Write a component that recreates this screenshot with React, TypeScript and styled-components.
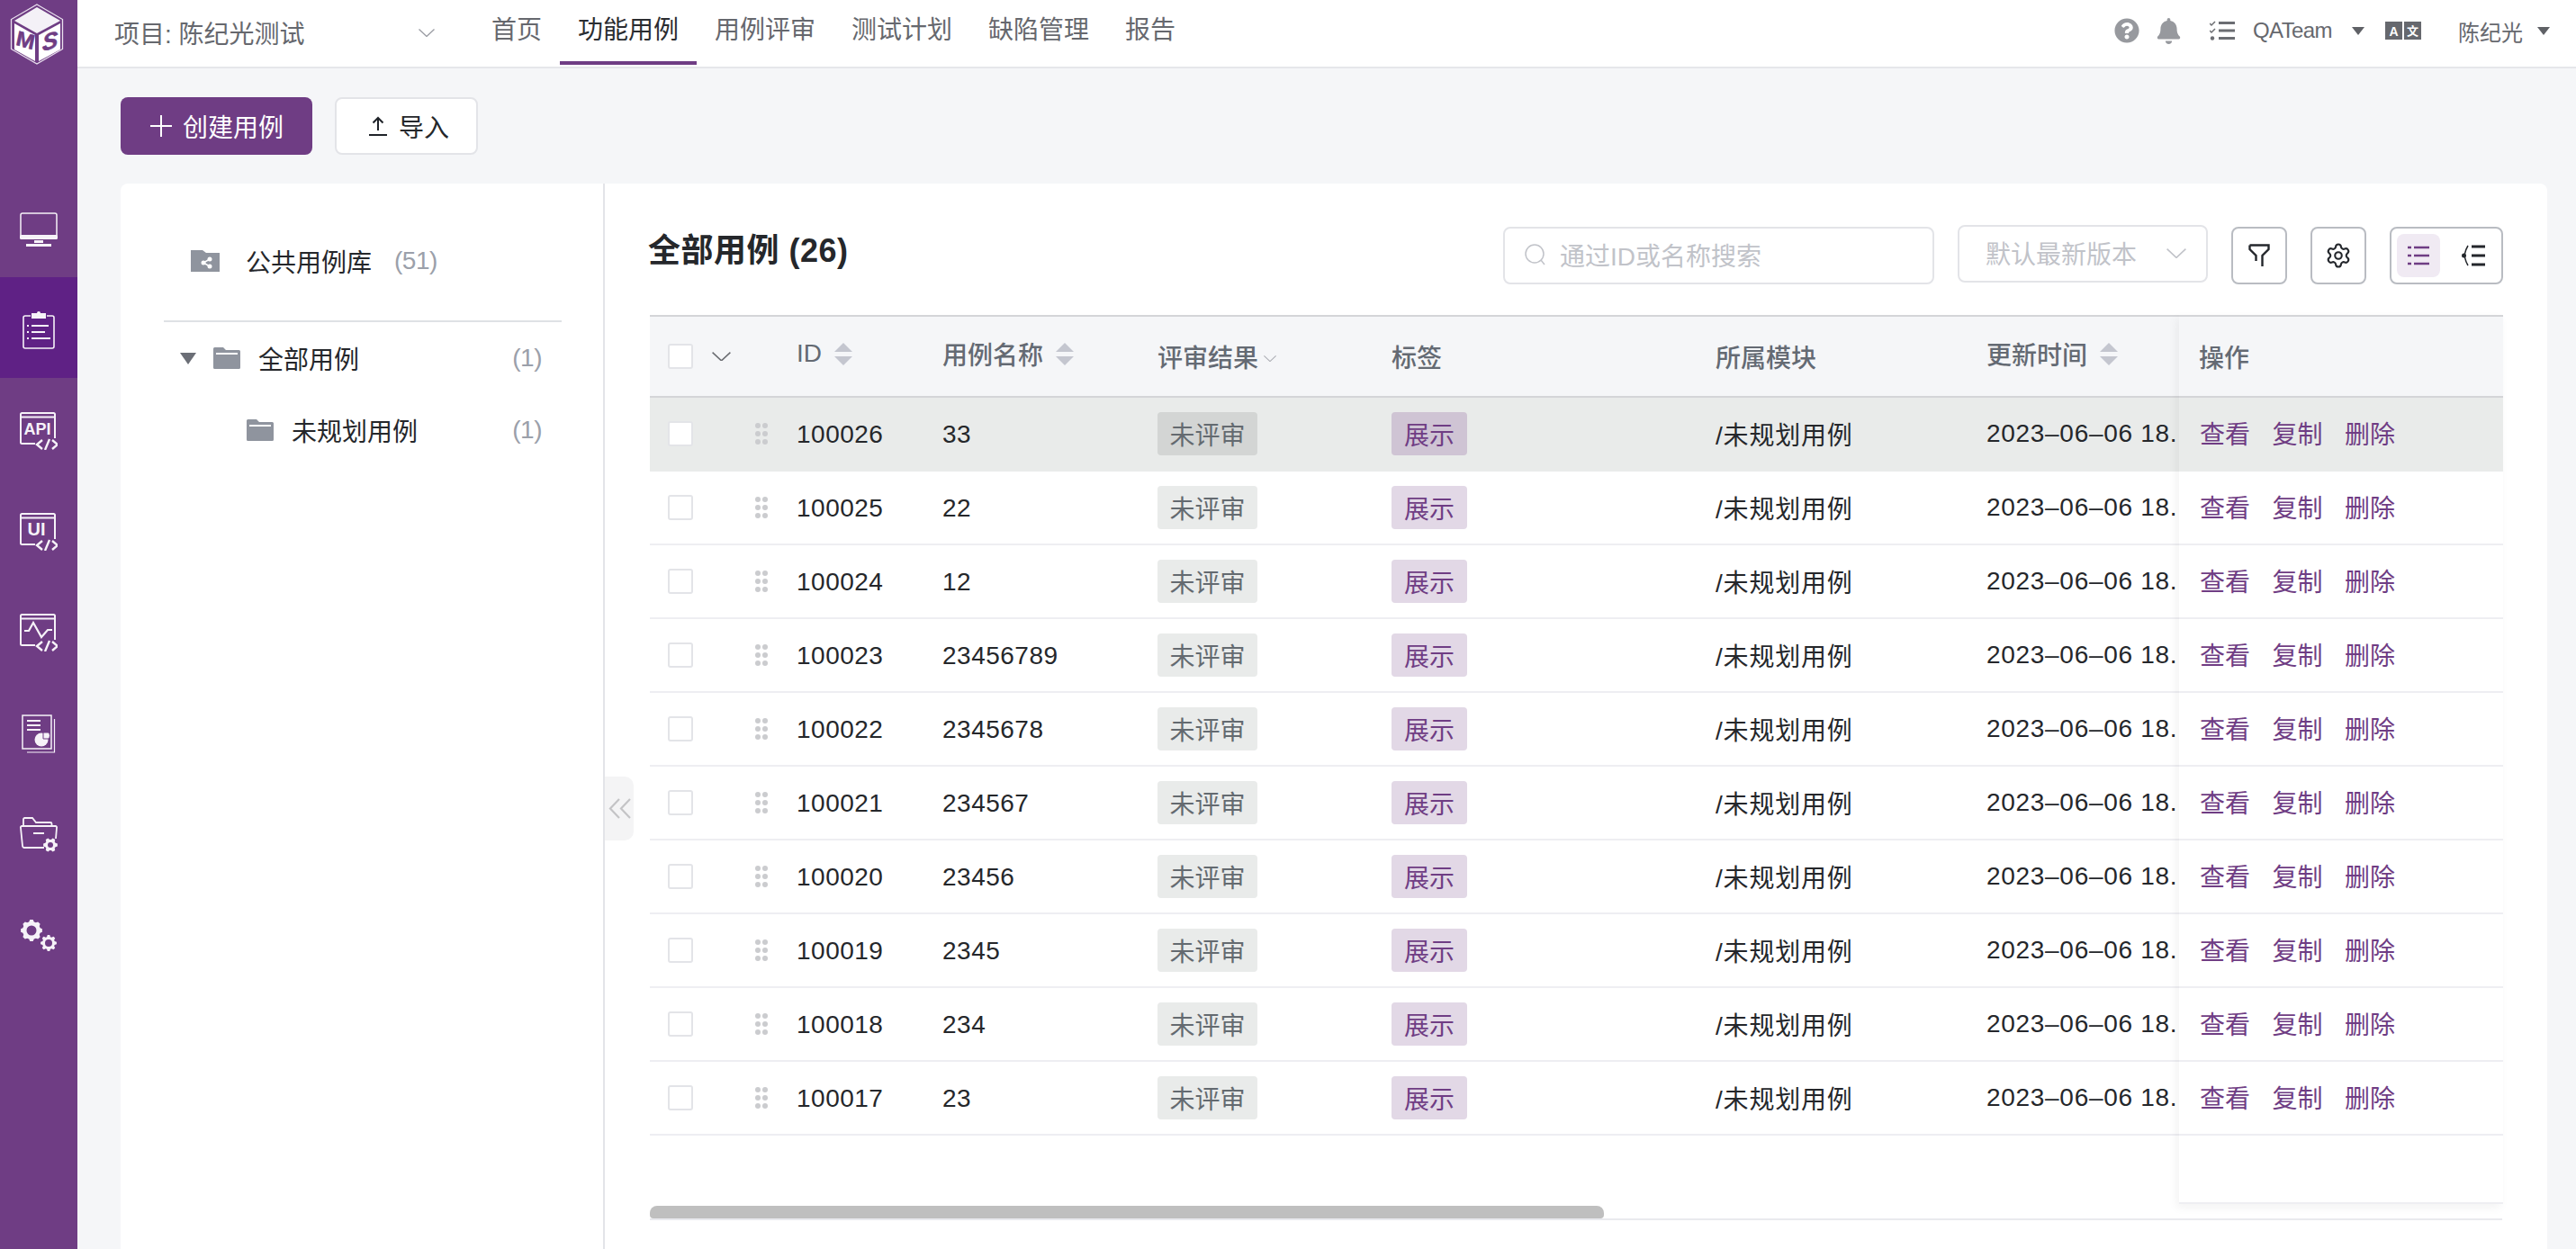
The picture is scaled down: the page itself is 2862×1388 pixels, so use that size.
import styled, { createGlobalStyle } from 'styled-components'
import { FaBell, FaQuestionCircle } from 'react-icons/fa'
import { Settings } from 'lucide-react'

const cases = [
  { id: '100026', name: '33' },
  { id: '100025', name: '22' },
  { id: '100024', name: '12' },
  { id: '100023', name: '23456789' },
  { id: '100022', name: '2345678' },
  { id: '100021', name: '234567' },
  { id: '100020', name: '23456' },
  { id: '100019', name: '2345' },
  { id: '100018', name: '234' },
  { id: '100017', name: '23' },
]

const tabs = ['首页', '功能用例', '用例评审', '测试计划', '缺陷管理', '报告']

const primary = '#6f3d84'
const iconWhite = '#f6f2f8'

const gearPath = (cx: number, cy: number, r: number, R: number, n: number) => {
  const pts: string[] = []
  const step = (Math.PI * 2) / n
  for (let i = 0; i < n; i++) {
    const a = i * step
    const at = (rad: number, ang: number) =>
      `${(cx + rad * Math.cos(ang)).toFixed(2)} ${(cy + rad * Math.sin(ang)).toFixed(2)}`
    pts.push(at(r, a - step * 0.36), at(R, a - step * 0.18), at(R, a + step * 0.18), at(r, a + step * 0.36))
  }
  return `M${pts.join('L')}Z`
}

const CodeMark = () => (
  <path d="M25 31l-6 5 6 5M36 31l6 5-6 5M28 42l5-12" fill="none" stroke={iconWhite} strokeWidth="2.400" />
)

const WindowFrame = () => (
  <path
    d="M17 35H2.500A1.500 1.500 0 0 1 1 33.500V2.500A1.500 1.500 0 0 1 2.500 1h35A1.500 1.500 0 0 1 39 2.500V29M1 5.500h38"
    fill="none"
    stroke={iconWhite}
    strokeWidth="2"
  />
)

const icons: React.ReactNode[] = [
  <svg key="desk" width="42" height="38" viewBox="0 0 42 38">
    <rect x="1" y="1" width="40" height="28" rx="2" fill="none" stroke={iconWhite} strokeWidth="1.500" />
    <rect y="25" width="42" height="5" rx="1.500" fill={iconWhite} />
    <rect x="16" y="31" width="10" height="3" fill={iconWhite} />
    <rect x="7" y="35" width="28" height="3" fill={iconWhite} />
  </svg>,
  <svg key="case" width="36" height="42" viewBox="0 0 36 42">
    <path d="M9 5H3a2 2 0 0 0-2 2v32a2 2 0 0 0 2 2h30a2 2 0 0 0 2-2V7a2 2 0 0 0-2-2h-6" fill="none" stroke={iconWhite} strokeWidth="1.600" />
    <path d="M10 2h6a2 2 0 0 1 4 0h6v6H10z" fill={iconWhite} />
    <path d="M5 16h2M5 23h2M5 30h2M10 16h19M10 23h15M10 30h21" stroke={iconWhite} strokeWidth="2" />
  </svg>,
  <svg key="api" width="42" height="42" viewBox="0 0 42 42">
    <WindowFrame />
    <text x="19.500" y="25" textAnchor="middle" fontSize="18" fontWeight="700" fontFamily="Liberation Sans" fill={iconWhite}>API</text>
    <CodeMark />
  </svg>,
  <svg key="ui" width="42" height="42" viewBox="0 0 42 42">
    <WindowFrame />
    <text x="18.500" y="25" textAnchor="middle" fontSize="20" fontWeight="700" fontFamily="Liberation Sans" fill={iconWhite}>UI</text>
    <CodeMark />
  </svg>,
  <svg key="perf" width="42" height="42" viewBox="0 0 42 42">
    <WindowFrame />
    <path d="M5 19h5l5-9 9 16 7-8h5" fill="none" stroke={iconWhite} strokeWidth="2.200" />
    <CodeMark />
  </svg>,
  <svg key="report" width="38" height="43" viewBox="0 0 38 43">
    <rect x="1" y="1" width="32" height="37" fill="none" stroke={iconWhite} strokeWidth="1.500" />
    <path d="M36.500 5v37H6" fill="none" stroke={iconWhite} strokeWidth="1.200" />
    <path d="M6 7h15M6 12h15M6 17h15" stroke={iconWhite} strokeWidth="1.800" />
    <circle cx="22" cy="28" r="7.500" fill={iconWhite} />
    <path d="M24 20h6a5 5 0 0 1 0 7h-6z" fill={iconWhite} stroke={primary} strokeWidth="1" />
  </svg>,
  <svg key="files" width="42" height="40" viewBox="0 0 42 40">
    <path d="M4 10V3.500A1.500 1.500 0 0 1 5.500 2H14l4 5h16a1.500 1.500 0 0 1 1.500 1.500V11" fill="none" stroke={iconWhite} strokeWidth="1.800" />
    <path d="M27 35H5a2 2 0 0 1-2-2L1 13a1.500 1.500 0 0 1 1.500-2h37a1.500 1.500 0 0 1 1.500 2l-1 12" fill="none" stroke={iconWhite} strokeWidth="1.800" />
    <path d="M15 19h12" stroke={iconWhite} strokeWidth="2" />
    <path d={gearPath(34, 32, 6, 8, 6)} fill={iconWhite} />
    <circle cx="34" cy="32" r="3" fill={primary} />
  </svg>,
  <svg key="gears" width="40" height="35" viewBox="0 0 40 35">
    <path d={gearPath(12, 12, 10, 12, 8)} fill={iconWhite} />
    <circle cx="12" cy="12" r="5.500" fill={primary} />
    <path d={gearPath(31, 26, 7, 9, 8)} fill={iconWhite} />
    <circle cx="31" cy="26" r="4" fill={primary} />
  </svg>,
]

const Logo = () => (
  <svg width="60" height="68" viewBox="0 0 60 68">
    <path d="M30 1l28.500 16.500v33L30 67 1.500 50.500v-33z" fill="none" stroke="#e9e0ee" strokeWidth="1.300" />
    <path d="M30 4l26 15-26 14L5 19z" fill="#f4f1f7" />
    <path d="M5 22l23 13v29L5 51z" fill="#fff" />
    <path d="M32 35l24-13v29L32 64z" fill="#fff" />
    <text transform="translate(7 46) skewY(16)" fontSize="24" fontWeight="700" fontStyle="italic" fontFamily="Liberation Sans" stroke={primary} strokeWidth="0.600" fill={primary}>M</text>
    <text transform="translate(36 53) skewY(-16)" fontSize="26" fontWeight="700" fontStyle="italic" fontFamily="Liberation Sans" stroke={primary} strokeWidth="0.600" fill={primary}>S</text>
  </svg>
)

const Chevron = ({ size = 18, color = '#9a9ca3' }: { size?: number; color?: string }) => (
  <svg width={size} height={size / 2} viewBox="0 0 18 9">
    <path d="M.5.5L9 8.500 17.500.5" fill="none" stroke={color} strokeWidth="1.300" />
  </svg>
)

const Folder = () => (
  <svg width="30" height="24" viewBox="0 0 30 24">
    <path d="M0 1.500A1.500 1.500 0 0 1 1.500 0H11l3 3h14.500A1.500 1.500 0 0 1 30 4.500V22.500a1.500 1.500 0 0 1-1.500 1.500h-27A1.500 1.500 0 0 1 0 22.500z" fill="#8f949e" />
    <rect x="3" y="6" width="24" height="2" fill="#fff" />
  </svg>
)

const SortIcon = () => (
  <SortMark>
    <span />
    <span />
  </SortMark>
)

const DragDots = () => (
  <svg width="14" height="24" viewBox="0 0 14 24">
    {[3, 12, 21].map((y) => (
      <g key={y} fill="#cbcccf">
        <circle cx="3" cy={y} r="3" />
        <circle cx="11" cy={y} r="3" />
      </g>
    ))}
  </svg>
)

export default function App() {
  return (
    <Page>
      <GlobalStyle />
      <SideBar>
        <LogoBox>
          <Logo />
        </LogoBox>
        {icons.map((icon, i) => (
          <SideItem key={i} $active={i === 1}>
            {icon}
          </SideItem>
        ))}
      </SideBar>

      <Main>
        <TopBar>
          <ProjectSelect>
            <span>项目: 陈纪光测试</span>
            <Chevron />
          </ProjectSelect>
          <Tabs>
            {tabs.map((tab, i) => (
              <Tab key={tab} $active={i === 1}>
                {tab}
              </Tab>
            ))}
          </Tabs>
          <TopRight>
            <TopItem $gap={0}>
              <FaQuestionCircle size={28} color="#97999e" />
            </TopItem>
            <TopItem $gap={18}>
              <FaBell size={29} color="#97999e" />
            </TopItem>
            <TopItem $gap={31}>
              <svg width="28" height="22" viewBox="0 0 28 22">
                <path d="M0 3l2 2 4-4M0 11l2 2 4-4" fill="none" stroke="#6b6d72" strokeWidth="1.500" />
                <circle cx="3" cy="19.500" r="2.200" fill="#6b6d72" />
                <path d="M10 2.500h18M10 11h18M10 19.500h18" stroke="#6b6d72" strokeWidth="3" />
              </svg>
            </TopItem>
            <TopItem $gap={20}>
              <TeamName>QATeam</TeamName>
            </TopItem>
            <TopItem $gap={22}>
              <Caret />
            </TopItem>
            <TopItem $gap={23}>
              <svg width="40" height="20" viewBox="0 0 40 20">
                <rect width="19" height="20" fill="#66686e" />
                <rect x="21" width="19" height="20" fill="#66686e" />
                <text x="9.500" y="15.500" textAnchor="middle" fontSize="14" fontWeight="700" fontFamily="Liberation Sans" fill="#fff">A</text>
                <text x="30.500" y="15" textAnchor="middle" fontSize="13" fontWeight="700" fontFamily="Noto Sans CJK SC" fill="#fff">文</text>
              </svg>
            </TopItem>
            <TopItem $gap={41}>
              <UserName>陈纪光</UserName>
            </TopItem>
            <TopItem $gap={16}>
              <Caret />
            </TopItem>
          </TopRight>
        </TopBar>

        <Actions>
          <PrimaryButton>
            <svg width="24" height="24" viewBox="0 0 24 24">
              <path d="M12 0v24M0 12h24" stroke="#fff" strokeWidth="2" />
            </svg>
            创建用例
          </PrimaryButton>
          <GhostButton>
            <svg width="22" height="22" viewBox="0 0 22 22">
              <path d="M11 16V2M5.500 7.500L11 2l5.500 5.500M1 21h20" fill="none" stroke="#1f2329" strokeWidth="2" />
            </svg>
            导入
          </GhostButton>
        </Actions>

        <Panel>
          <TreePane>
            <PublicRow>
              <svg width="32" height="24" viewBox="0 0 32 24">
                <path d="M0 0h13l4 3h15v21H0z" fill="#8f949e" />
                <circle cx="21" cy="10" r="2.500" fill="#fff" />
                <circle cx="21" cy="18" r="2.500" fill="#fff" />
                <circle cx="14" cy="14" r="2.500" fill="#fff" />
                <path d="M21 10l-7 4 7 4" fill="none" stroke="#fff" strokeWidth="1.500" />
              </svg>
              <PublicName>公共用例库</PublicName>
              <Count>(51)</Count>
            </PublicRow>
            <TreeDivider />
            <TreeRow $indent={18}>
              <TreeCaret />
              <Folder />
              <TreeLabel>全部用例</TreeLabel>
              <Count>(1)</Count>
            </TreeRow>
            <TreeRow $indent={92}>
              <Folder />
              <TreeLabel>未规划用例</TreeLabel>
              <Count>(1)</Count>
            </TreeRow>
          </TreePane>

          <CollapseHandle>
            <svg width="25" height="23" viewBox="0 0 25 23">
              <path d="M12 1L2 11.500 12 22M24 1L14 11.500 24 22" fill="none" stroke="#c4c4c6" strokeWidth="2.200" />
            </svg>
          </CollapseHandle>

          <ContentPane>
            <ContentTop>
              <Title>全部用例 (26)</Title>
              <Toolbar>
                <SearchBox>
                  <svg width="24" height="24" viewBox="0 0 24 24">
                    <circle cx="11" cy="11" r="10" fill="none" stroke="#c1c3c9" strokeWidth="1.500" />
                    <path d="M18 18l4 5" stroke="#c1c3c9" strokeWidth="1.500" />
                  </svg>
                  <span>通过ID或名称搜索</span>
                </SearchBox>
                <VersionSelect>
                  <span>默认最新版本</span>
                  <Chevron size={22} color="#c1c3c9" />
                </VersionSelect>
                <IconButton>
                  <svg width="24" height="26" viewBox="0 0 24 26">
                    <path d="M1.500 1.500h21v4.500l-7 7v12M1.500 1.500v4.500l7 7v6" fill="none" stroke="#24272c" strokeWidth="2.400" />
                  </svg>
                </IconButton>
                <IconButton>
                  <Settings size={30} color="#24272c" strokeWidth={1.700} />
                </IconButton>
                <ViewToggle>
                  <ViewActive>
                    <svg width="24" height="22" viewBox="0 0 24 22">
                      <path d="M0 2h4M0 11h4M0 20h4M7 2h17M7 11h17M7 20h17" stroke={primary} strokeWidth="2.500" />
                    </svg>
                  </ViewActive>
                  <svg width="26" height="24" viewBox="0 0 26 24">
                    <path d="M7 1C4 6 4 8 3 12c1 4 1 6 4 11" fill="none" stroke="#24272c" strokeWidth="1.500" />
                    <circle cx="2.500" cy="12" r="2.500" fill="#24272c" />
                    <path d="M11 2h15M11 12h15M11 22h15" stroke="#24272c" strokeWidth="3" />
                  </svg>
                </ViewToggle>
              </Toolbar>
            </ContentTop>

            <TableBody>
              <Rows>
                <HeadRow>
                  <HeadCell>
                    <CheckBox />
                    <HeadChevron>
                      <Chevron size={21} color="#6b6d72" />
                    </HeadChevron>
                  </HeadCell>
                  <HeadCell $raised>
                    ID
                    <SortIcon />
                  </HeadCell>
                  <HeadCell $raised>
                    用例名称
                    <SortIcon />
                  </HeadCell>
                  <HeadCell>
                    评审结果
                    <TinyChevron>
                      <Chevron size={14} color="#a9abb1" />
                    </TinyChevron>
                  </HeadCell>
                  <HeadCell>标签</HeadCell>
                  <HeadCell>所属模块</HeadCell>
                  <HeadCell $raised>
                    更新时间
                    <SortIcon />
                  </HeadCell>
                </HeadRow>
                {cases.map((c, i) => (
                  <Row key={c.id} $hover={i === 0}>
                    <CheckCell>
                      <CheckBox />
                      <DragDots />
                    </CheckCell>
                    <NumberCell>{c.id}</NumberCell>
                    <NumberCell>{c.name}</NumberCell>
                    <Cell>
                      <ReviewTag $hover={i === 0}>未评审</ReviewTag>
                    </Cell>
                    <Cell>
                      <LabelTag $hover={i === 0}>展示</LabelTag>
                    </Cell>
                    <ModuleCell>/未规划用例</ModuleCell>
                    <TimeCell>2023–06–06 18.</TimeCell>
                  </Row>
                ))}
              </Rows>
              <OpsColumn>
                <OpsHead>操作</OpsHead>
                {cases.map((c, i) => (
                  <OpsRow key={c.id} $hover={i === 0}>
                    <OpLink>查看</OpLink>
                    <OpLink>复制</OpLink>
                    <OpLink>删除</OpLink>
                  </OpsRow>
                ))}
              </OpsColumn>
            </TableBody>
            <ScrollTrack>
              <ScrollThumb />
            </ScrollTrack>
          </ContentPane>
        </Panel>
      </Main>
    </Page>
  )
}

const GlobalStyle = createGlobalStyle`
  html, body {
    margin: 0;
    padding: 0;
    background: #f5f6f8;
  }

  * {
    box-sizing: border-box;
  }
`

const Page = styled.div`
  display: flex;
  width: 2862px;
  height: 1388px;
  overflow: hidden;
  background: #f5f6f8;
  color: #25272b;
  font-family: 'Liberation Sans', 'Noto Sans CJK SC', sans-serif;
  font-size: 28px;
`

const SideBar = styled.aside`
  flex: 0 0 86px;
  background: ${primary};
`

const LogoBox = styled.div`
  display: flex;
  justify-content: flex-start;
  height: 196px;
  padding: 4px 1px 0 11px;
`

const SideItem = styled.div<{ $active?: boolean }>`
  display: flex;
  align-items: center;
  justify-content: center;
  height: 112px;
  padding-top: 6px;
  background: ${({ $active }) => ($active ? '#5f2185' : 'transparent')};
`

const Main = styled.div`
  flex: 1;
  display: flex;
  flex-direction: column;
  min-width: 0;
`

const TopBar = styled.header`
  display: flex;
  align-items: center;
  height: 76px;
  padding-left: 41px;
  background: #fff;
  border-bottom: 2px solid #e6e7ea;
`

const ProjectSelect = styled.div`
  display: flex;
  align-items: center;
  justify-content: space-between;
  width: 356px;
  padding-bottom: 2px;
  color: #66686e;
`

const Tabs = styled.nav`
  display: flex;
  align-self: flex-start;
  margin-left: 43px;
`

const Tab = styled.div<{ $active?: boolean }>`
  height: 72px;
  padding: 0 20px;
  line-height: 68px;
  color: ${({ $active }) => ($active ? '#2b2d31' : '#66686e')};
  border-bottom: 4px solid ${({ $active }) => ($active ? primary : 'transparent')};
`

const TopRight = styled.div`
  display: flex;
  align-items: center;
  margin-left: auto;
  padding-right: 29px;
  padding-bottom: 6px;
`

const TopItem = styled.div<{ $gap: number }>`
  display: flex;
  align-items: center;
  margin-left: ${({ $gap }) => $gap}px;
`

const TeamName = styled.span`
  font-size: 24px;
  letter-spacing: -0.600px;
  color: #66686e;
`

const UserName = styled.span`
  font-size: 24px;
  color: #66686e;
`

const Caret = styled.span`
  width: 0;
  height: 0;
  border-left: 7.500px solid transparent;
  border-right: 7.500px solid transparent;
  border-top: 9px solid #5f6166;
`

const Actions = styled.div`
  display: flex;
  gap: 25px;
  padding: 32px 0 32px 48px;
`

const PrimaryButton = styled.div`
  display: flex;
  align-items: center;
  gap: 12px;
  height: 64px;
  width: 213px;
  padding-left: 33px;
  border-radius: 8px;
  background: ${primary};
  color: #fff;
`

const GhostButton = styled.div`
  display: flex;
  align-items: center;
  gap: 12px;
  height: 64px;
  width: 159px;
  padding-left: 35px;
  border: 2px solid #e3e4e8;
  border-radius: 8px;
  background: #fff;
  color: #25272b;
`

const Panel = styled.section`
  position: relative;
  flex: 1;
  display: flex;
  margin: 0 32px 0 48px;
  background: #fff;
  border-radius: 8px 8px 0 0;
`

const TreePane = styled.div`
  flex: 0 0 538px;
  padding: 56px 0 0 48px;
  border-right: 2px solid #e3e4e8;
`

const PublicRow = styled.div`
  display: flex;
  align-items: center;
  height: 60px;
  padding-left: 30px;
`

const PublicName = styled.span`
  margin-left: 29px;
`

const Count = styled.span`
  margin-left: 25px;
  letter-spacing: -0.500px;
  color: #9ba0aa;
`

const TreeDivider = styled.div`
  width: 442px;
  height: 2px;
  margin-top: 36px;
  background: #dfe1e5;
`

const TreeRow = styled.div<{ $indent: number }>`
  display: flex;
  align-items: center;
  width: 442px;
  height: 80px;
  padding: 0 22px 0 ${({ $indent }) => $indent}px;

  ${Count} {
    margin-left: auto;
  }
`

const TreeCaret = styled.span`
  width: 0;
  height: 0;
  margin-right: 19px;
  border-left: 9.500px solid transparent;
  border-right: 9.500px solid transparent;
  border-top: 13px solid #6b6e76;
`

const TreeLabel = styled.span`
  margin-left: 20px;
`

const CollapseHandle = styled.div`
  position: absolute;
  top: 659px;
  left: 538px;
  display: flex;
  align-items: center;
  justify-content: center;
  width: 32px;
  height: 71px;
  border-radius: 0 10px 10px 0;
  background: #f4f4f5;
`

const ContentPane = styled.div`
  flex: 1;
  min-width: 0;
  display: flex;
  flex-direction: column;
  padding: 0 49px 0 50px;
`

const ContentTop = styled.div`
  display: flex;
  height: 146px;
  padding-top: 46px;
`

const Title = styled.h2`
  margin: 2px 0 0 -2px;
  font-size: 36px;
  font-weight: 600;
  line-height: 54px;
  letter-spacing: 0.500px;
  color: #25272b;
`

const Toolbar = styled.div`
  display: flex;
  align-items: flex-start;
  gap: 26px;
  margin-left: auto;
`

const SearchBox = styled.div`
  display: flex;
  align-items: center;
  gap: 15px;
  width: 479px;
  height: 64px;
  margin-top: 2px;
  padding: 0 0 2px 22px;
  border: 2px solid #e3e4e8;
  border-radius: 8px;
  color: #c1c3c9;
`

const VersionSelect = styled.div`
  display: flex;
  align-items: center;
  justify-content: space-between;
  width: 278px;
  height: 64px;
  padding: 0 22px 2px 29px;
  border: 2px solid #e3e4e8;
  border-radius: 8px;
  color: #c1c3c9;
`

const IconButton = styled.div`
  display: flex;
  align-items: center;
  justify-content: center;
  width: 62px;
  height: 64px;
  margin-top: 2px;
  border: 2px solid #b9bcc2;
  border-radius: 8px;
`

const ViewToggle = styled.div`
  display: flex;
  align-items: center;
  gap: 24px;
  width: 126px;
  height: 64px;
  margin-top: 2px;
  padding-left: 6px;
  border: 2px solid #b9bcc2;
  border-radius: 8px;
`

const ViewActive = styled.div`
  display: flex;
  align-items: center;
  justify-content: center;
  width: 48px;
  height: 48px;
  border-radius: 8px;
  background: #f0eaf3;
`

const TableBody = styled.div`
  display: flex;
  height: 988px;
`

const Rows = styled.div`
  flex: 0 0 1699px;
  min-width: 0;
  overflow: hidden;
`

const columns = '163px 162px 239px 260px 360px 301px 214px'

const HeadRow = styled.div`
  display: grid;
  grid-template-columns: ${columns};
  height: 92px;
  background: #f5f6f8;
  border-top: 2px solid #d4d5d8;
  border-bottom: 2px solid #d4d5d8;
`

const HeadCell = styled.div<{ $raised?: boolean }>`
  display: flex;
  align-items: center;
  padding-bottom: ${({ $raised }) => ($raised ? '6px' : '0')};
  font-weight: 500;
  color: #646a73;

  &:first-child {
    padding-left: 20px;
  }
`

const HeadChevron = styled.span`
  display: flex;
  margin-left: 21px;
`

const TinyChevron = styled.span`
  display: flex;
  margin-left: 6px;
  padding-top: 4px;
`

const SortMark = styled.span`
  display: inline-flex;
  flex-direction: column;
  gap: 5px;
  margin-left: 14px;

  span {
    width: 0;
    height: 0;
    border-left: 10px solid transparent;
    border-right: 10px solid transparent;
  }

  span:first-child {
    border-bottom: 10px solid #c4c6cf;
  }

  span:last-child {
    border-top: 10px solid #c4c6cf;
  }
`

const Row = styled.div<{ $hover?: boolean }>`
  display: grid;
  grid-template-columns: ${columns};
  height: 82px;
  background: ${({ $hover }) => ($hover ? '#e9ebea' : '#fff')};
  border-bottom: 2px solid ${({ $hover }) => ($hover ? '#e9ebea' : '#eeeef2')};
`

const Cell = styled.div`
  display: flex;
  align-items: center;
  white-space: nowrap;
  color: #25272b;
`

const CheckCell = styled(Cell)`
  gap: 69px;
  padding-left: 20px;
`

const NumberCell = styled(Cell)`
  padding-top: 1px;
  letter-spacing: 0.500px;
`

const ModuleCell = styled(Cell)`
  letter-spacing: 0.800px;
`

const TimeCell = styled(Cell)`
  overflow: hidden;
  letter-spacing: 0.700px;
`

const CheckBox = styled.span`
  flex: none;
  width: 28px;
  height: 28px;
  border: 2px solid #e3e4e8;
  border-radius: 3px;
  background: #fff;
`

const ReviewTag = styled.span<{ $hover?: boolean }>`
  display: inline-flex;
  align-items: center;
  height: 48px;
  padding: 0 13.500px;
  border-radius: 4px;
  background: ${({ $hover }) => ($hover ? '#d3d5d4' : '#e9ebea')};
  color: #646a70;
`

const LabelTag = styled.span<{ $hover?: boolean }>`
  display: inline-flex;
  align-items: center;
  height: 48px;
  padding: 0 14px;
  border-radius: 4px;
  background: ${({ $hover }) => ($hover ? '#cfc4d4' : '#e2d8e6')};
  color: ${primary};
`

const OpsColumn = styled.div`
  position: relative;
  z-index: 1;
  flex: 0 0 360px;
  background: #fff;
  border-bottom: 2px solid #eeeef2;
  box-shadow: -3px 4px 10px rgba(0, 0, 0, 0.05);
`

const OpsHead = styled.div`
  display: flex;
  align-items: center;
  height: 92px;
  padding-left: 22px;
  background: #f5f6f8;
  border-top: 2px solid #d4d5d8;
  border-bottom: 2px solid #d4d5d8;
  font-weight: 500;
  color: #646a73;
`

const OpsRow = styled.div<{ $hover?: boolean }>`
  display: flex;
  align-items: center;
  gap: 24.500px;
  height: 82px;
  padding: 0 0 2px 23px;
  background: ${({ $hover }) => ($hover ? '#e9ebea' : '#fff')};
  border-bottom: 2px solid ${({ $hover }) => ($hover ? '#e9ebea' : '#eeeef2')};
`

const OpLink = styled.span`
  color: ${primary};
`

const ScrollTrack = styled.div`
  width: 2058px;
  height: 16px;
  margin-top: 2px;
  border-bottom: 2px solid #e9eaee;
`

const ScrollThumb = styled.div`
  width: 1060px;
  height: 14px;
  border-radius: 8px 8px 4px 4px;
  background: #bfbfbf;
`
